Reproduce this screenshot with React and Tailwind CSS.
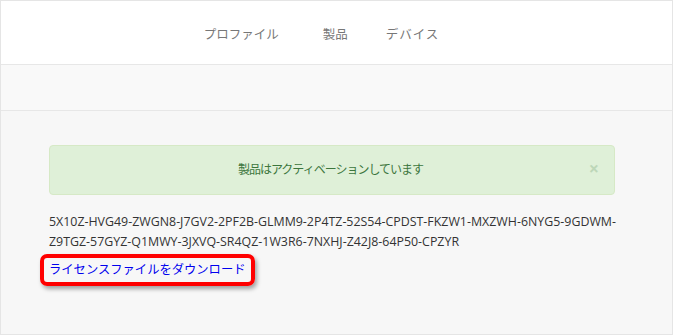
export default function App() {
  const font = { fontFamily: '"Open Sans", "Noto Sans CJK JP", sans-serif' };
  return (
    <div className="w-[673px] h-[335px] border border-[#e5e5e5] bg-[#f7f7f7] overflow-hidden" style={font}>
      <div className="h-[64px] bg-white border-b border-[#e7e7e7] flex justify-center items-center pr-[30px]">
        <nav className="flex items-center text-[12.5px] text-[#777] pt-[6px]">
          <span>プロファイル</span>
          <span className="ml-[44px]">製品</span>
          <span className="ml-[38px] tracking-[1px]">デバイス</span>
        </nav>
      </div>
      <div className="h-[46px] bg-[#f9f9f9] border-b border-[#e7e7e7]"></div>
      <div className="pl-[48px] pt-[34px]">
        <div className="w-[566px] h-[50px] bg-[#dff0d8] border border-[#d6e9c6] rounded-[4px] flex items-center justify-center relative text-[12px] tracking-[-1px] text-[#3c763d]">
          <span className="pr-[3px]">製品はアクティベーションしています</span>
          <span className="absolute right-[16px] top-[13px] text-[18px] font-bold text-[#3c763d] opacity-20 leading-none">×</span>
        </div>
        <div className="mt-[17px] w-[570px] text-[12.4px] leading-[20px] text-[#333]">
          5X10Z-HVG49-ZWGN8-J7GV2-2PF2B-GLMM9-2P4TZ-52S54-CPDST-FKZW1-MXZWH-6NYG5-9GDWM-Z9TGZ-57GYZ-Q1MWY-3JXVQ-SR4QZ-1W3R6-7NXHJ-Z42J8-64P50-CPZYR
        </div>
        <div className="mt-[2px] -ml-[9px] w-[215px] h-[32px] border-[4px] border-[#ff0000] rounded-[7px] shadow-[2px_3px_4px_rgba(0,0,0,0.35)] flex items-center pl-[5px]">
          <a className="text-[12.3px] whitespace-nowrap text-[#0000ee]">ライセンスファイルをダウンロード</a>
        </div>
      </div>
    </div>
  );
}
